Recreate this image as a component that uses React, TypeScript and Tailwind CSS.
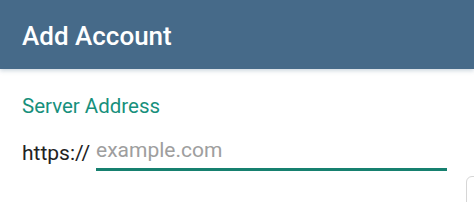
export default function App() {
  return (
    <div
      className="relative h-[202px] w-[474px] overflow-hidden bg-white"
      style={{ fontFamily: 'Roboto, "Liberation Sans", sans-serif' }}
    >
      <header className="flex h-[69px] items-center bg-[#466a89] px-[22px] shadow-[0_2px_4px_rgba(70,106,137,0.25)]">
        <h1 className="pt-[4px] text-[26px] font-medium text-white">Add Account</h1>
      </header>

      <div className="px-[22px] pt-[25px]">
        <label className="block text-[20.5px] leading-[24px] text-[#17907c]">Server Address</label>
        <div className="mt-[20px] flex items-end">
          <span className="pb-[6px] text-[21px] leading-[24px] text-[#222]">https://</span>
          <div className="ml-[6px] w-[351px] border-b-[3px] border-[#16806f] pb-[6px] text-[21px] leading-[24px] text-[#9e9e9e]">
            example.com
          </div>
        </div>
      </div>

      <div className="absolute left-[466px] top-[176px] h-[40px] w-[30px] rounded-[6px] border border-[#d6d6d6] bg-white" />
    </div>
  );
}
